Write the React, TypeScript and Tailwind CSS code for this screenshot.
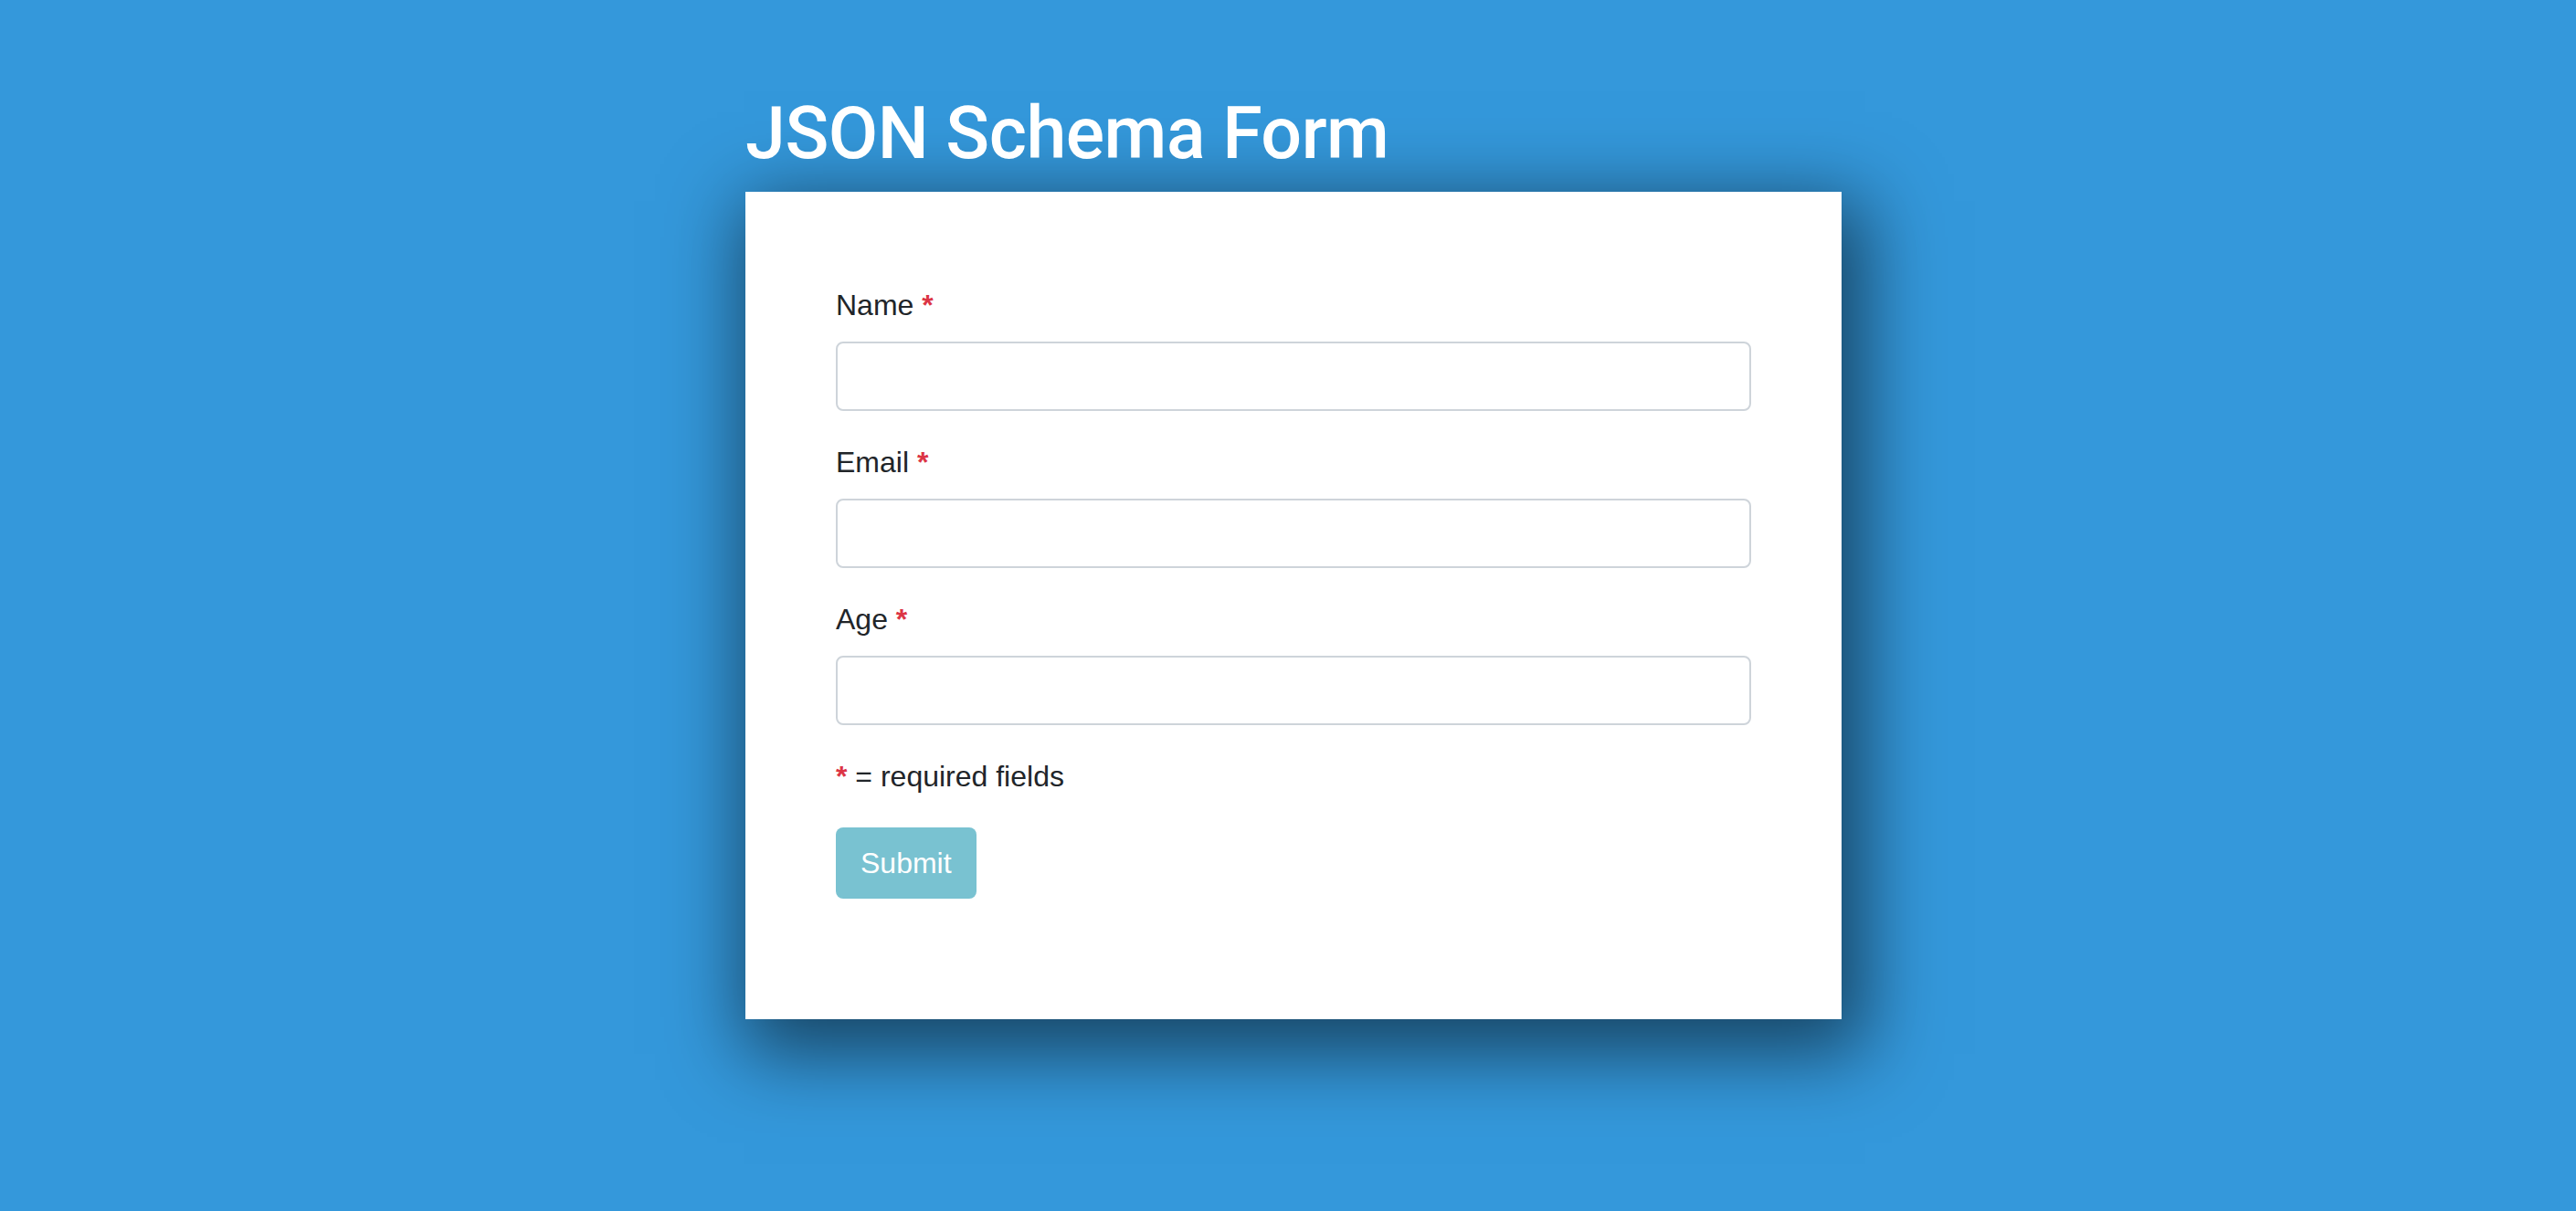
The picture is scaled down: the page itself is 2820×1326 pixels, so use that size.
import React from "react";

const fields = ["Name", "Email", "Age"];

function Req() {
  return <span className="font-bold text-[#dc3545]">*</span>;
}

export default function App() {
  return (
    <div className="min-h-[1326px] w-full bg-[#3498db] pl-[816px] pt-[98px] font-['Liberation_Sans',Arial,sans-serif] text-[#212529]">
      <div className="w-[1200px]">
        <h1 className="mb-[16px] font-['Roboto','Liberation_Sans',sans-serif] text-[79px] font-medium leading-[96px] tracking-[-0.5px] text-white">
          JSON Schema Form
        </h1>
        <div className="bg-white px-[99px] pb-[132px] pt-[100px] shadow-[12px_24px_80px_14px_rgba(0,0,0,0.55)]">
          <form onSubmit={(e) => e.preventDefault()}>
            {fields.map((f) => (
              <div key={f} className="mb-[32px]">
                <label className="mb-[16px] block text-[32px] leading-[48px]">
                  {f} <Req />
                </label>
                <input
                  type={f === "Email" ? "email" : f === "Age" ? "number" : "text"}
                  className="block h-[76px] w-full rounded-[8px] border-2 border-[#ced4da] bg-white px-[24px] text-[32px] outline-none"
                />
              </div>
            ))}
            <p className="mb-[32px] text-[32px] leading-[48px]">
              <Req /> = required fields
            </p>
            <button
              type="submit"
              disabled
              className="h-[78px] rounded-[8px] bg-[#79c2d1] px-[27px] text-[32px] leading-[48px] text-white"
            >
              Submit
            </button>
          </form>
        </div>
      </div>
    </div>
  );
}
